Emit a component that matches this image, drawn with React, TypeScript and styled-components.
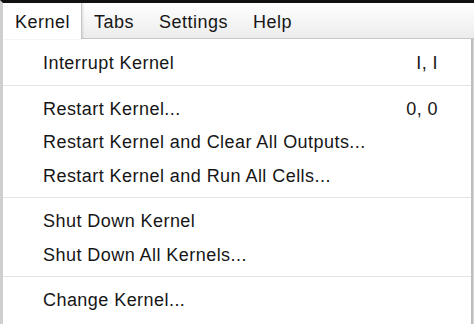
import styled, { createGlobalStyle } from 'styled-components';

const GlobalStyle = createGlobalStyle`
  html, body {
    margin: 0;
    padding: 0;
    background: #ffffff;
  }
  body {
    font-family: 'Liberation Sans', Arial, sans-serif;
    -webkit-font-smoothing: antialiased;
  }
`;

interface MenuEntry {
  label: string;
  shortcut?: string;
}

const groups: MenuEntry[][] = [
  [{ label: 'Interrupt Kernel', shortcut: 'I, I' }],
  [
    { label: 'Restart Kernel...', shortcut: '0, 0' },
    { label: 'Restart Kernel and Clear All Outputs...' },
    { label: 'Restart Kernel and Run All Cells...' },
  ],
  [{ label: 'Shut Down Kernel' }, { label: 'Shut Down All Kernels...' }],
  [{ label: 'Change Kernel...' }],
];

const topMenus = ['Kernel', 'Tabs', 'Settings', 'Help'];

const App = () => {
  return (
    <>
      <GlobalStyle />
      <Frame>
        <MenuBar>
          {topMenus.map((name, i) => (
            <MenuTab key={name} $active={i === 0}>
              {name}
            </MenuTab>
          ))}
          <BarFill />
        </MenuBar>
        <Dropdown>
          {groups.map((group, gi) => (
            <Group key={gi}>
              {group.map((item) => (
                <Item key={item.label}>
                  <span>{item.label}</span>
                  {item.shortcut && <span>{item.shortcut}</span>}
                </Item>
              ))}
            </Group>
          ))}
        </Dropdown>
      </Frame>
    </>
  );
};

export default App;

const Frame = styled.div`
  width: 474px;
  height: 324px;
  box-sizing: border-box;
  border-top: 3px solid #111;
  border-left: 3px solid #cfcfcf;
  background: #f4f4f4;
  overflow: hidden;
  display: flex;
  flex-direction: column;
`;

const MenuBar = styled.div`
  display: flex;
  height: 36px;
  flex-shrink: 0;
`;

const MenuTab = styled.div<{ $active?: boolean }>`
  display: flex;
  align-items: center;
  padding: 3px 12px 0;
  font-size: 18px;
  letter-spacing: 0.5px;
  color: #161616;
  background: ${(p) =>
    p.$active ? '#ffffff' : 'linear-gradient(#ffffff, #ececec)'};
  border-bottom: ${(p) => (p.$active ? 'none' : '1px solid #c6c6c6')};
  border-right: ${(p) => (p.$active ? '1px solid #c6c6c6' : 'none')};
  box-shadow: ${(p) => (p.$active ? '1px 0 2px rgba(0,0,0,0.12)' : 'none')};
  position: relative;
  z-index: ${(p) => (p.$active ? 2 : 0)};
  padding-right: ${(p) => (p.$active ? 11 : 13)}px;
`;

const BarFill = styled.div`
  flex: 1;
  background: linear-gradient(#ffffff, #ececec);
  border-bottom: 1px solid #c6c6c6;
`;

const Dropdown = styled.div`
  width: 468px;
  background: #ffffff;
  box-shadow: 2px 0 0 #bdbdbd, 3px 0 0 #d8d8d8;
  flex: 1;
`;

const Group = styled.div`
  padding: 7px 0 4px;
  border-top: 1px solid #e4e4e4;
  &:first-child {
    border-top: none;
    padding-top: 8px;
  }
`;

const Item = styled.div`
  display: flex;
  align-items: center;
  justify-content: space-between;
  height: 33.5px;
  padding: 0 33px 0 40px;
  font-size: 18px;
  letter-spacing: 0.45px;
  color: #161616;
`;
